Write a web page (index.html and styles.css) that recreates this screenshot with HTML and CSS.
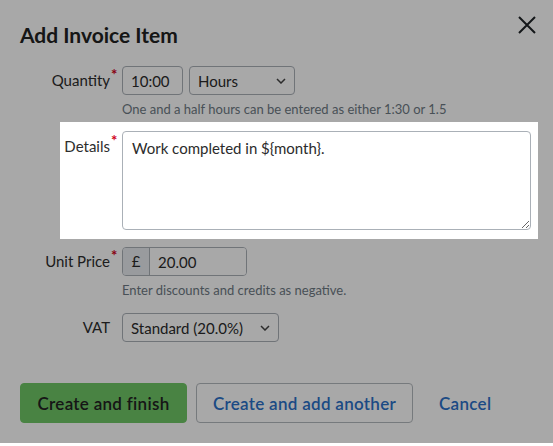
FILE: index.html
```html
<!DOCTYPE html>
<html>
	<head>
		<meta charset="UTF-8">
		<title>Add Invoice Item</title>
		<link rel="stylesheet" href="styles.css">
	</head>

	<body>
		<div class="modal">
			<div class="modal_head">
				<h2 class="modal_title">Add Invoice Item</h2>
				<button class="close_btn" type="button" aria-label="Close">
					<svg width="18" height="18" viewBox="0 0 18 18"><path d="M1 1 L17 17 M17 1 L1 17" stroke="#1f2327" stroke-width="2" fill="none"/></svg>
				</button>
			</div>

			<form class="item_form">
				<div class="f_row">
					<label class="f_label req">Quantity</label>
					<div class="f_field">
						<div class="f_inline">
							<input class="f_input qty" type="text" value="10:00">
							<div class="f_select unit">
								<select><option>Hours</option><option>Days</option></select>
								<svg class="chev" width="10" height="6" viewBox="0 0 10 6"><path d="M1 1 L5 5 L9 1" stroke="#444" stroke-width="1.5" fill="none"/></svg>
							</div>
						</div>
						<p class="f_help">One and a half hours can be entered as either 1:30 or 1.5</p>
					</div>
				</div>

				<!-- tour step: details row stays lit, the rest is dimmed -->
				<div class="f_row details_row">
					<label class="f_label req">Details</label>
					<div class="f_field">
						<textarea class="f_area">Work completed in ${month}.</textarea>
					</div>
					<div class="spotlight"></div>
				</div>

				<div class="f_row price_row">
					<label class="f_label req">Unit Price</label>
					<div class="f_field">
						<div class="f_group">
							<span class="f_prefix">£</span>
							<input class="f_input price" type="text" value="20.00">
						</div>
						<p class="f_help">Enter discounts and credits as negative.</p>
					</div>
				</div>

				<div class="f_row vat_row">
					<label class="f_label">VAT</label>
					<div class="f_field">
						<div class="f_select vat">
							<select><option>Standard (20.0%)</option><option>Zero (0.0%)</option></select>
							<svg class="chev" width="10" height="6" viewBox="0 0 10 6"><path d="M1 1 L5 5 L9 1" stroke="#444" stroke-width="1.5" fill="none"/></svg>
						</div>
					</div>
				</div>

				<div class="f_actions">
					<button class="btn btn_green" type="button">Create and finish</button>
					<button class="btn btn_outline" type="button">Create and add another</button>
					<a class="btn_link" href="#">Cancel</a>
				</div>
			</form>
		</div>
	</body>
</html>
```

FILE: styles.css
```css
* {
	margin: 0;
	padding: 0;
	box-sizing: border-box;
}

body {
	background: #fff;
	font-family: "Lato", "Noto Sans", sans-serif;
	color: #2b2b2b;
	overflow: hidden;
}

.modal {
	padding: 22px 22px 20px 20px;
}

.modal_head {
	display: flex;
	justify-content: space-between;
	align-items: flex-start;
}

.modal_title {
	font-size: 21px;
	line-height: 26px;
	font-weight: 700;
	color: #222;
}

.close_btn {
	margin: -6px -5px 0 0;
	width: 18px;
	height: 18px;
	border: 0;
	background: none;
	cursor: pointer;
}

.item_form {
	margin-top: 18px;
}

.f_row {
	display: grid;
	grid-template-columns: 90px 1fr;
	column-gap: 12px;
}

.f_label {
	position: relative;
	justify-self: end;
	font-size: 15px;
	line-height: 29px;
	color: #2d2d2d;
}

.f_label.req::after {
	content: "*";
	position: absolute;
	left: 100%;
	top: -6px;
	margin-left: 1px;
	color: #d0021b;
	font-size: 15px;
	font-weight: 700;
}

.f_inline {
	display: flex;
	gap: 6px;
}

.f_input,
.f_select select,
.f_area {
	font-family: inherit;
	font-size: 15px;
	color: #2b2b2b;
	border: 1px solid #aab0b7;
	border-radius: 4px;
	background: #fff;
	outline: none;
}

.f_input {
	height: 29px;
	padding: 0 8px;
}

.qty {
	width: 61px;
}

.f_select {
	position: relative;
	width: fit-content;
}

.f_select select {
	display: block;
	appearance: none;
	-webkit-appearance: none;
	height: 29px;
	padding: 0 24px 0 8px;
}

.unit select {
	width: 106px;
}

.vat select {
	width: 157px;
}

.f_select .chev {
	position: absolute;
	right: 9px;
	top: 12px;
	pointer-events: none;
}

.f_help {
	margin-top: 5px;
	font-size: 13px;
	line-height: 18px;
	color: #6e7a84;
}

.details_row {
	position: relative;
	margin-top: 13px;
}

.details_row .f_label {
	line-height: 31px;
}

.f_area {
	display: block;
	width: 100%;
	height: 99px;
	padding: 6px 9px;
	line-height: 20px;
}

.spotlight {
	position: absolute;
	top: -9px;
	bottom: -9px;
	left: 40px;
	right: -7px;
	box-shadow: 0 0 0 9999px rgba(0, 0, 0, 0.34);
	pointer-events: none;
	z-index: 10;
}

.price_row {
	margin-top: 17px;
}

.f_group {
	display: flex;
	width: 125px;
	height: 29px;
	border: 1px solid #aab0b7;
	border-radius: 4px;
	overflow: hidden;
}

.f_prefix {
	width: 27px;
	flex: none;
	text-align: center;
	font-size: 15px;
	line-height: 27px;
	background: #e8ecf0;
	border-right: 1px solid #aab0b7;
}

.f_group .price {
	border: 0;
	border-radius: 0;
	height: 27px;
	width: 100%;
	padding: 0 8px;
}

.vat_row {
	margin-top: 14px;
}

.f_actions {
	display: flex;
	align-items: center;
	margin-top: 41px;
}

.btn {
	height: 40px;
	padding: 0 10px;
	font-family: inherit;
	font-size: 17px;
	font-weight: 600;
	letter-spacing: 0.3px;
	border-radius: 4px;
	cursor: pointer;
}

.btn_green {
	width: 167px;
	background: #70c766;
	border: 1px solid #70c766;
	color: #222;
}

.btn_outline {
	width: 217px;
	margin-left: 9px;
	background: #fff;
	border: 1px solid #b4b9be;
	color: #2b71c9;
}

.btn_link {
	margin-left: 26px;
	font-size: 17px;
	font-weight: 600;
	letter-spacing: 0.3px;
	color: #2b71c9;
	text-decoration: none;
}
```
